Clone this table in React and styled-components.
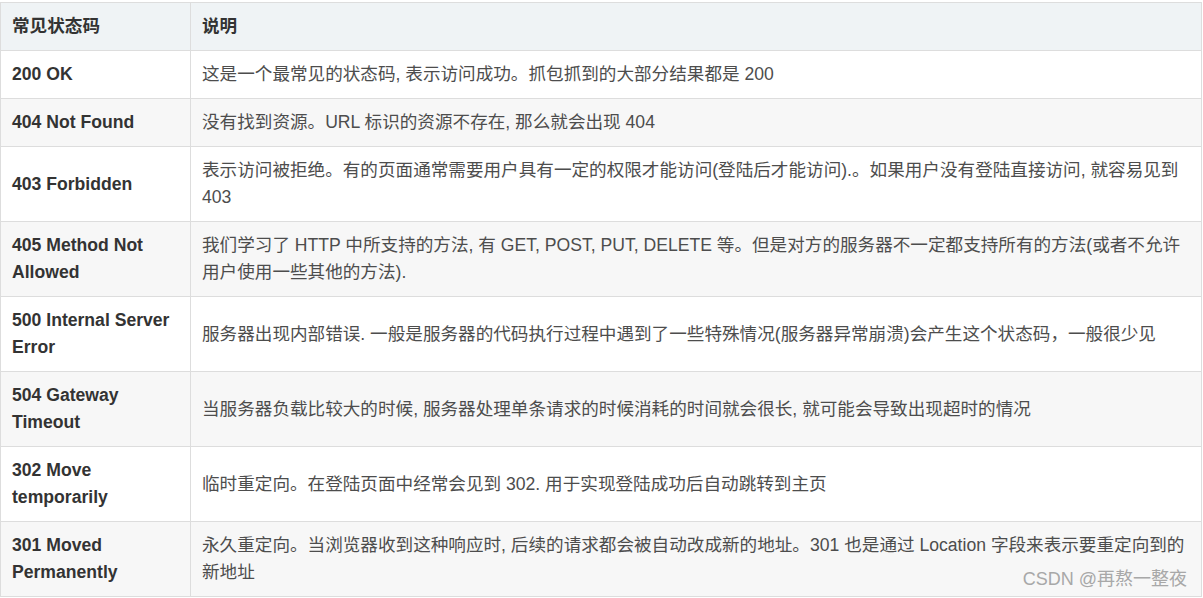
import React from "react";
import styled, { createGlobalStyle } from "styled-components";

const Global = createGlobalStyle`
  html, body { margin: 0; padding: 0; background: #fff; }
  body { font-family: "Liberation Sans", Arial, "Noto Sans CJK SC", sans-serif; }
`;

const Wrap = styled.div`
  position: relative;
  width: 1203px;
  padding-top: 2px;
`;

const Table = styled.table`
  width: 1202px;
  border-collapse: collapse;
  table-layout: fixed;
  font-size: 17.6px;
  line-height: 27px;
  color: #4d4d4d;
`;

const Col = styled.col`
  width: ${(p) => p.$w || "auto"};
`;

const Th = styled.th`
  text-align: left;
  font-weight: bold;
  color: #333;
  background: #eff3f5;
  border: 1px solid #dddddd;
  padding: 10px 10px 10px 11px;
`;

const Tr = styled.tr`
  background: ${(p) => (p.$alt ? "#f7f7f7" : "#ffffff")};
`;

const Td = styled.td`
  border: 1px solid #dddddd;
  padding: 10px 10px 10px 11px;
  vertical-align: middle;
  font-weight: ${(p) => (p.$bold ? "bold" : "normal")};
  color: ${(p) => (p.$bold ? "#333" : "#4d4d4d")};
`;

const Mark = styled.div`
  position: absolute;
  right: 16px;
  bottom: 7px;
  font-size: 18px;
  line-height: 22px;
  color: #a8a8a8;
  font-family: "Liberation Sans", Arial, "Noto Sans CJK SC", sans-serif;
`;

const rows = [
  ["200 OK", "这是一个最常见的状态码, 表示访问成功。抓包抓到的大部分结果都是 200"],
  ["404 Not Found", "没有找到资源。URL 标识的资源不存在, 那么就会出现 404"],
  ["403 Forbidden", "表示访问被拒绝。有的页面通常需要用户具有一定的权限才能访问(登陆后才能访问).。如果用户没有登陆直接访问, 就容易见到 403"],
  ["405 Method Not Allowed", "我们学习了 HTTP 中所支持的方法, 有 GET, POST, PUT, DELETE 等。但是对方的服务器不一定都支持所有的方法(或者不允许用户使用一些其他的方法)."],
  ["500 Internal Server Error", "服务器出现内部错误. 一般是服务器的代码执行过程中遇到了一些特殊情况(服务器异常崩溃)会产生这个状态码，一般很少见"],
  ["504 Gateway Timeout", "当服务器负载比较大的时候, 服务器处理单条请求的时候消耗的时间就会很长, 就可能会导致出现超时的情况"],
  ["302 Move temporarily", "临时重定向。在登陆页面中经常会见到 302. 用于实现登陆成功后自动跳转到主页"],
  ["301 Moved Permanently", "永久重定向。当浏览器收到这种响应时, 后续的请求都会被自动改成新的地址。301 也是通过 Location 字段来表示要重定向到的新地址"],
];

export default function App() {
  return (
    <>
      <Global />
      <Wrap>
        <Table>
          <colgroup>
            <Col $w="190px" />
            <Col />
          </colgroup>
          <thead>
            <tr>
              <Th>常见状态码</Th>
              <Th>说明</Th>
            </tr>
          </thead>
          <tbody>
            {rows.map(([code, desc], i) => (
              <Tr key={code} $alt={i % 2 === 1}>
                <Td $bold>{code}</Td>
                <Td>{desc}</Td>
              </Tr>
            ))}
          </tbody>
        </Table>
        <Mark>CSDN @再熬一整夜</Mark>
      </Wrap>
    </>
  );
}
